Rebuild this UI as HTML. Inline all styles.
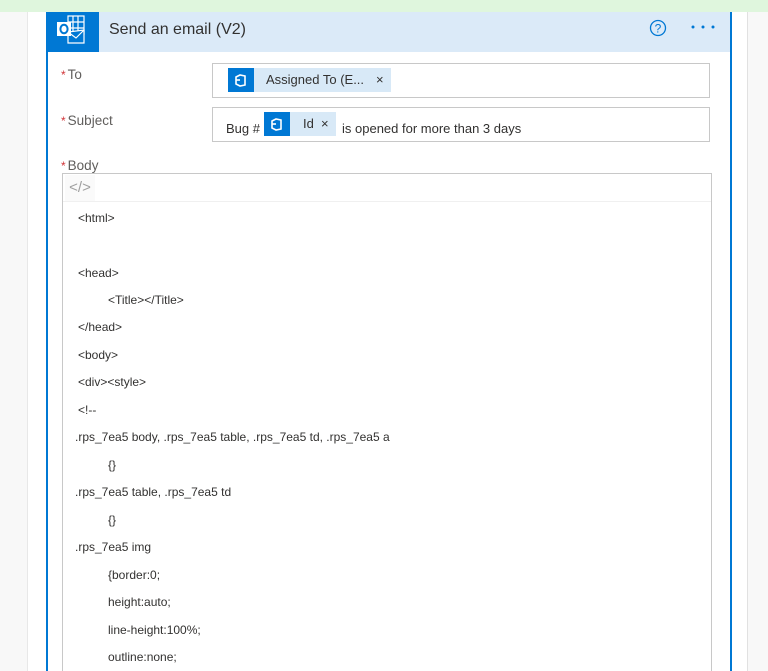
<!DOCTYPE html>
<html style="width:768px;height:671px;overflow:hidden"><head><meta charset="utf-8"><style>
*{margin:0;padding:0;box-sizing:border-box}
body{width:768px;height:671px;overflow:hidden;background:#f8f8f8;font-family:"Liberation Sans",sans-serif;position:relative;color:#323130}
.top{position:absolute;left:0;top:0;width:768px;height:12px;background:#dff6dd}
.col{position:absolute;left:27px;top:12px;width:721px;height:659px;background:#fff;border-left:1px solid #e8e8e8;border-right:1px solid #e1e1e1}
.card{position:absolute;left:46px;top:12px;width:686px;height:659px;border:2px solid #0078d4;border-top:none;border-bottom:none;background:#fff}
.hdr{position:absolute;left:0;top:0;width:682px;height:40px;background:#dbeaf8}
.ib{position:absolute;left:0;top:0;width:51px;height:40px;background:#0078d4}
.title{position:absolute;left:61px;top:9px;font-size:16px;color:#323130}
.lbl{position:absolute;font-size:13.5px;color:#605e5c}
.lbl b{color:#d13438;font-weight:normal;font-size:12px;margin-right:2px}
.inp{position:absolute;left:164px;width:498px;height:35px;border:1px solid #c8c8c8;background:#fff}
.chip{position:absolute;height:24px;background:#d8e9f7;font-size:13px;color:#323130;line-height:24px}
.ci{position:absolute;left:0;top:0;width:26px;height:24px;background:#0078d4}
.bodybox{position:absolute;left:14px;top:161px;width:650px;height:498px;border:1px solid #c8c8c8;border-bottom:none}
.tb{position:absolute;left:0;top:0;width:648px;height:28px;border-bottom:1px solid #f0f0f0}
.code{position:absolute;font-size:12px;color:#323130;white-space:pre}
</style></head><body>
<div class="top"></div>
<div class="col"></div>
<div class="card">
 <div class="hdr">
  <div class="ib"><svg width="51" height="40" viewBox="0 0 51 40">
   <rect x="20" y="4" width="16" height="18" fill="none" stroke="#fff" stroke-width="1.2"/>
   <path d="M25 4v18M30 4v18M20 10h16M20 16h16" stroke="#fff" stroke-width="1.2"/>
   <path d="M20 20v11h16V18z" fill="#0078d4" stroke="#fff" stroke-width="1.2"/>
   <path d="M20 20l8 6 8-8" fill="none" stroke="#fff" stroke-width="1.2"/>
   <rect x="9" y="10" width="14" height="14" fill="#fff"/>
   <ellipse cx="16" cy="17" rx="3.6" ry="4.3" fill="none" stroke="#0078d4" stroke-width="2"/>
  </svg></div>
  <div class="title">Send an email (V2)</div>
  <svg style="position:absolute;left:600px;top:6px" width="20" height="20" viewBox="0 0 20 20"><circle cx="10" cy="10" r="7.5" fill="none" stroke="#0078d4" stroke-width="1.3"/><text x="10" y="14.5" font-size="12" text-anchor="middle" fill="#0078d4" font-family="Liberation Sans">?</text></svg>
  <svg style="position:absolute;left:642px;top:12px" width="26" height="6"><circle cx="3" cy="3" r="1.5" fill="#0078d4"/><circle cx="13" cy="3" r="1.5" fill="#0078d4"/><circle cx="23" cy="3" r="1.5" fill="#0078d4"/></svg>
 </div>
 <div class="lbl" style="left:13px;top:55px"><b>*</b>To</div>
 <div class="inp" style="top:51px">
  <div class="chip" style="left:15px;top:4px;width:163px"><div class="ci"><svg width="26" height="24"><path d="M8 9l4-2 5 1v9l-5 1-4-2z" fill="none" stroke="#fff" stroke-width="1.6"/><path d="M8 12h4" stroke="#fff" stroke-width="1.6"/></svg></div><span style="position:absolute;left:38px">Assigned To (E...</span><span style="position:absolute;left:148px">×</span></div>
 </div>
 <div class="lbl" style="left:13px;top:101px"><b>*</b>Subject</div>
 <div class="inp" style="top:95px">
  <span style="position:absolute;left:13px;top:13px;font-size:13px">Bug #</span>
  <div class="chip" style="left:51px;top:4px;width:72px"><div class="ci"><svg width="26" height="24"><path d="M8 9l4-2 5 1v9l-5 1-4-2z" fill="none" stroke="#fff" stroke-width="1.6"/><path d="M8 12h4" stroke="#fff" stroke-width="1.6"/></svg></div><span style="position:absolute;left:39px">Id</span><span style="position:absolute;left:57px">×</span></div>
  <span style="position:absolute;left:129px;top:13px;font-size:13px">is opened for more than 3 days</span>
 </div>
 <div class="lbl" style="left:13px;top:146px"><b>*</b>Body</div>
 <div class="bodybox">
  <div class="tb"><div style="position:absolute;left:2px;top:1px;width:30px;height:26px;background:#fafafa;color:#a0a0a0;font-size:15px;text-align:center;line-height:26px">&lt;/&gt;</div></div>
  <div class="code" style="left:15px;top:37px">&lt;html&gt;</div>
  <div class="code" style="left:15px;top:92px">&lt;head&gt;</div>
  <div class="code" style="left:45px;top:119px">&lt;Title&gt;&lt;/Title&gt;</div>
  <div class="code" style="left:15px;top:146px">&lt;/head&gt;</div>
  <div class="code" style="left:15px;top:174px">&lt;body&gt;</div>
  <div class="code" style="left:15px;top:201px">&lt;div&gt;&lt;style&gt;</div>
  <div class="code" style="left:15px;top:229px">&lt;!--</div>
  <div class="code" style="left:12px;top:256px">.rps_7ea5 body, .rps_7ea5 table, .rps_7ea5 td, .rps_7ea5 a</div>
  <div class="code" style="left:45px;top:284px">{}</div>
  <div class="code" style="left:12px;top:311px">.rps_7ea5 table, .rps_7ea5 td</div>
  <div class="code" style="left:45px;top:339px">{}</div>
  <div class="code" style="left:12px;top:366px">.rps_7ea5 img</div>
  <div class="code" style="left:45px;top:394px">{border:0;</div>
  <div class="code" style="left:45px;top:421px">height:auto;</div>
  <div class="code" style="left:45px;top:449px">line-height:100%;</div>
  <div class="code" style="left:45px;top:476px">outline:none;</div>
 </div>
</div>
</body></html>
